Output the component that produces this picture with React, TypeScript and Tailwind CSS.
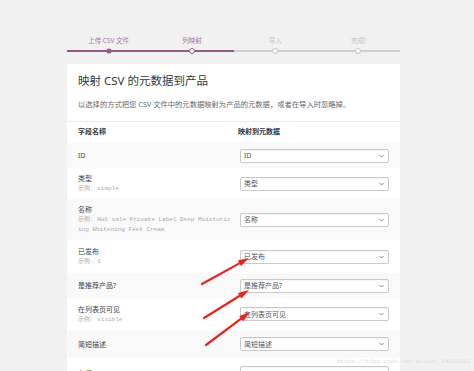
import React from "react";

const cjk = { fontFamily: '"Noto Sans", "Noto Sans CJK SC", sans-serif' };
const mono = { fontFamily: '"Liberation Mono", "Noto Sans CJK SC", monospace' };

type Row = { label: string; ex?: string[]; value: string; h: number };

const rows: Row[] = [
  { label: "ID", value: "ID", h: 25 },
  { label: "类型", ex: ["示例: simple"], value: "类型", h: 31 },
  {
    label: "名称",
    ex: ["示例: Hot sale Private Label Deep Moisturiz", "ing Whitening Feet Cream"],
    value: "名称",
    h: 41,
  },
  { label: "已发布", ex: ["示例: 1"], value: "已发布", h: 33 },
  { label: "是推荐产品?", value: "是推荐产品?", h: 25 },
  { label: "在列表页可见", ex: ["示例: visible"], value: "在列表页可见", h: 32 },
  { label: "简短描述", value: "简短描述", h: 28 },
  { label: "有货?", value: "", h: 30 },
];

function Select({ value }: { value: string }) {
  return (
    <div className="ml-[2px] flex h-[14px] w-[149px] items-center justify-between rounded-[2px] border border-[#c9c9c9] bg-white pl-[3px] pr-[4px] shadow-[inset_0_1px_1px_rgba(0,0,0,0.04)]">
      <span className="text-[7px] leading-none text-[#555]">{value}</span>
      <svg width="5" height="4" viewBox="0 0 5 4" className="text-[#777]">
        <path d="M0.5 1 L2.5 3 L4.5 1" fill="none" stroke="currentColor" strokeWidth="0.9" />
      </svg>
    </div>
  );
}

function Step({ label, state }: { label: string; state: "done" | "active" | "todo" }) {
  const line = state === "todo" ? "bg-[#cfcfcf]" : "bg-[#96588a]";
  return (
    <div className="flex flex-col items-center">
      <div
        className={`mb-[5px] text-[6.5px] leading-[8px] ${
          state === "todo" ? "text-[#c4c4c4]" : "text-[#a57a9d]"
        }`}
      >
        {label}
      </div>
      <div className={`relative h-[2px] w-full ${line}`}>
        {state === "done" && (
          <div className="absolute left-1/2 top-1/2 h-[5px] w-[5px] -translate-x-1/2 -translate-y-1/2 rounded-full bg-[#96588a]" />
        )}
        {state === "active" && (
          <div className="absolute left-1/2 top-1/2 h-[6px] w-[6px] -translate-x-1/2 -translate-y-1/2 rounded-full border-[1.5px] border-[#96588a] bg-white" />
        )}
        {state === "todo" && (
          <div className="absolute left-1/2 top-1/2 h-[6px] w-[6px] -translate-x-1/2 -translate-y-1/2 rounded-full border border-[#c4c4c4] bg-white" />
        )}
      </div>
    </div>
  );
}

function Arrow({ x1, y1, x2, y2 }: { x1: number; y1: number; x2: number; y2: number }) {
  const dx = x2 - x1;
  const dy = y2 - y1;
  const len = Math.sqrt(dx * dx + dy * dy);
  const ux = dx / len;
  const uy = dy / len;
  const hl = 11;
  const hw = 3.2;
  const bx = x2 - ux * hl;
  const by = y2 - uy * hl;
  const px = -uy;
  const py = ux;
  return (
    <g>
      <line x1={x1} y1={y1} x2={bx + ux * 2} y2={by + uy * 2} stroke="#e8231b" strokeWidth="2.2" strokeLinecap="round" />
      <polygon
        points={`${x2},${y2} ${bx + px * hw},${by + py * hw} ${bx - px * hw},${by - py * hw}`}
        fill="#e8231b"
      />
    </g>
  );
}

export default function App() {
  return (
    <div className="relative h-[371px] w-[474px] overflow-hidden bg-[#f1f1f1]" style={cjk}>
      <div className="ml-[67px] w-[333px] pt-[37px]">
        <div className="grid grid-cols-4">
          <Step label="上传 CSV 文件" state="done" />
          <Step label="列映射" state="active" />
          <Step label="导入" state="todo" />
          <Step label="完成!" state="todo" />
        </div>
      </div>

      <div className="ml-[67px] mt-[12px] w-[333px] bg-white">
        <div className="px-[11px] pt-[9px]">
          <div className="text-[11.5px] leading-[16px] text-[#32373c]">映射 CSV 的元数据到产品</div>
          <div className="mt-[10px] text-[7.3px] leading-[10px] text-[#666]">
            以选择的方式把您 CSV 文件中的元数据映射为产品的元数据，或者在导入时忽略掉。
          </div>
        </div>

        <div className="mt-[12px] border-t border-[#ececec]">
          <div className="flex h-[21px] items-center">
            <div className="w-[171px] pl-[11px] text-[7px] font-bold text-[#32373c]">字段名称</div>
            <div className="text-[7px] font-bold text-[#32373c]">映射到元数据</div>
          </div>
          {rows.map((r, i) => (
            <div
              key={r.label}
              className={`flex items-center ${i % 2 === 0 ? "bg-[#f9f9f9]" : "bg-white"}`}
              style={{ height: r.h }}
            >
              <div className="flex w-[171px] flex-col justify-center pl-[11px]">
                <div className="text-[7px] leading-[11px] text-[#444]">{r.label}</div>
                {r.ex &&
                  r.ex.map((e) => (
                    <div key={e} className="text-[6px] leading-[10px] text-[#aaa]" style={mono}>
                      {e}
                    </div>
                  ))}
              </div>
              <Select value={r.value} />
            </div>
          ))}
        </div>
      </div>

      <div className="absolute bottom-[5px] right-[4px] text-[6px] text-[#dcdcdc]" style={mono}>
        https://blog.csdn.net/weixin_44105681
      </div>

      <svg className="pointer-events-none absolute left-0 top-0" width="474" height="371">
        <Arrow x1={202} y1={284} x2={249} y2={258} />
        <Arrow x1={204} y1={318} x2={249} y2={290} />
        <Arrow x1={206} y1={345} x2={250} y2={312} />
      </svg>
    </div>
  );
}
